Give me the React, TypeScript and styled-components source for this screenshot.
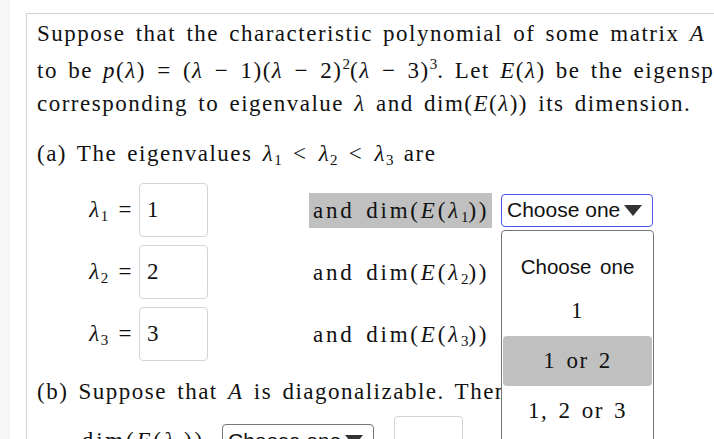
import React from "react";
import styled, { createGlobalStyle } from "styled-components";

const Global = createGlobalStyle`
  html, body { margin: 0; padding: 0; background: #fff; overflow: hidden; }
  body { width: 714px; height: 439px; }
  #root { width: 714px; height: 439px; overflow: hidden; }
`;

const Page = styled.div`
  display: flex;
  width: 714px;
  height: 439px;
  overflow: hidden;
  font-family: "Liberation Serif", "Times New Roman", serif;
  font-size: 23px;
  letter-spacing: 1.5px;
  word-spacing: 3px;
  color: #111;
`;

const LeftStrip = styled.div`
  flex: 0 0 10px;
  background: #f6f6f6;
`;

const Main = styled.div`
  flex: 1 1 auto;
  padding: 13px 0 0 16px;
  min-width: 0;
`;

const Box = styled.div`
  width: 900px;
  border-top: 1px solid #d2d2d2;
  border-left: 1px solid #d2d2d2;
  padding: 3px 0 0 10px;
  min-height: 600px;
`;

const Line = styled.div<{ $mt?: number }>`
  white-space: nowrap;
  line-height: 33px;
  height: 33px;
  margin-top: ${(p) => p.$mt ?? 0}px;
`;

const I = styled.span`
  font-style: italic;
`;

const Op = styled.span`
  padding: 0 1px;
`;

const Sub = styled.sub`
  font-size: 15px;
  letter-spacing: 0;
  vertical-align: -4px;
  line-height: 0;
`;

const Sup = styled.sup`
  font-size: 15px;
  letter-spacing: 0;
  vertical-align: 9px;
  line-height: 0;
`;

const Rows = styled.div`
  display: flex;
  flex-direction: column;
  gap: 8px;
  margin-top: 13px;
`;

const Row = styled.div`
  display: grid;
  grid-template-columns: 102px 69px 101px 183px auto;
  align-items: center;
  height: 54px;
  white-space: nowrap;
`;

const Label = styled.div`
  text-align: right;
  padding-right: 6px;
`;

const Input = styled.div`
  box-sizing: border-box;
  width: 69px;
  height: 54px;
  border: 1px solid #d4d4d4;
  border-radius: 4px;
  padding-left: 7px;
  line-height: 52px;
`;

const DimCell = styled.div<{ $active?: boolean }>`
  grid-column: 4;
  box-sizing: border-box;
  height: 35px;
  line-height: 35px;
  padding-left: 4px;
  letter-spacing: 2.8px;
  background: ${(p) => (p.$active ? "#c0c0c0" : "transparent")};
`;

const SelectWrap = styled.div`
  grid-column: 5;
  position: relative;
  margin-left: 9px;
`;

const Select = styled.div<{ $focus?: boolean }>`
  box-sizing: border-box;
  width: 152px;
  height: 33px;
  border: ${(p) => (p.$focus ? "1.5px solid #4b55f0" : "1px solid #767676")};
  border-radius: 4px;
  font-family: "Liberation Sans", Arial, sans-serif;
  font-size: 21px;
  letter-spacing: 0;
  word-spacing: 0;
  color: #111;
  display: flex;
  align-items: center;
  padding-left: 5px;
  gap: 4px;
  overflow: hidden;
`;

const List = styled.div`
  position: absolute;
  left: 0;
  top: 36px;
  width: 153px;
  height: 240px;
  box-sizing: border-box;
  border: 1px solid #767676;
  border-radius: 4px;
  background: #fff;
  padding-top: 5px;
  z-index: 5;
`;

const Option = styled.div<{ $sans?: boolean; $hl?: boolean }>`
  height: 50px;
  margin: 0 1px;
  border-radius: 4px;
  display: flex;
  align-items: center;
  justify-content: center;
  box-sizing: border-box;
  padding-top: ${(p) => (p.$sans ? 12 : 0)}px;
  font-family: ${(p) =>
    p.$sans ? '"Liberation Sans", Arial, sans-serif' : '"Liberation Serif", "Times New Roman", serif'};
  font-size: ${(p) => (p.$sans ? 20.5 : 23)}px;
  letter-spacing: ${(p) => (p.$sans ? 0 : 1.5)}px;
  background: ${(p) => (p.$hl ? "#c0c0c0" : "transparent")};
`;

const BottomRow = styled.div`
  display: grid;
  grid-template-columns: 168px 152px 69px;
  column-gap: 17px;
  align-items: start;
  margin-top: 8px;
  white-space: nowrap;
`;

const BLabel = styled.div`
  text-align: right;
  letter-spacing: 2.8px;
  line-height: 33px;
  margin-top: 8px;
`;

const BSelect = styled(Select)`
  margin-top: 8px;
`;

const BInput = styled(Input)`
  margin-left: 3px;
`;

const Caret = () => (
  <svg width="18" height="11" viewBox="0 0 18 11">
    <path d="M0 0 H18 L9 11 Z" fill="#333" />
  </svg>
);

const lam = <I>λ</I>;

const dim = (n: number) => (
  <>
    dim(<I>E</I>({lam}
    <Sub>{n}</Sub>))
  </>
);

export default function App() {
  return (
    <>
      <Global />
      <Page>
        <LeftStrip />
        <Main>
          <Box>
            <Line>
              Suppose that the characteristic polynomial of some matrix <I>A</I>
            </Line>
            <Line $mt={4}>
              to be <I>p</I>({lam}) <Op>=</Op> ({lam} <Op>−</Op> 1)({lam} <Op>−</Op> 2)<Sup>2</Sup>({lam}{" "}
              <Op>−</Op> 3)<Sup>3</Sup>. Let <I>E</I>({lam}) be the eigenspace of <I>A</I>
            </Line>
            <Line>
              corresponding to eigenvalue {lam} and dim(<I>E</I>({lam})) its dimension.
            </Line>
            <Line $mt={17}>
              (a) The eigenvalues {lam}
              <Sub>1</Sub> <Op>&lt;</Op> {lam}
              <Sub>2</Sub> <Op>&lt;</Op> {lam}
              <Sub>3</Sub> are
            </Line>
            <Rows>
              <Row>
                <Label>
                  {lam}
                  <Sub>1</Sub> =
                </Label>
                <Input>1</Input>
                <DimCell $active>and {dim(1)}</DimCell>
                <SelectWrap>
                  <Select $focus>
                    Choose one
                    <Caret />
                  </Select>
                  <List>
                    <Option $sans>Choose one</Option>
                    <Option>1</Option>
                    <Option $hl>1 or 2</Option>
                    <Option>1, 2 or 3</Option>
                  </List>
                </SelectWrap>
              </Row>
              <Row>
                <Label>
                  {lam}
                  <Sub>2</Sub> =
                </Label>
                <Input>2</Input>
                <DimCell>and {dim(2)}</DimCell>
              </Row>
              <Row>
                <Label>
                  {lam}
                  <Sub>3</Sub> =
                </Label>
                <Input>3</Input>
                <DimCell>and {dim(3)}</DimCell>
              </Row>
            </Rows>
            <Line $mt={14}>
              (b) Suppose that <I>A</I> is diagonalizable. Then the
            </Line>
            <BottomRow>
              <BLabel>{dim(1)}</BLabel>
              <BSelect>
                Choose one
                <Caret />
              </BSelect>
              <BInput />
            </BottomRow>
          </Box>
        </Main>
      </Page>
    </>
  );
}
